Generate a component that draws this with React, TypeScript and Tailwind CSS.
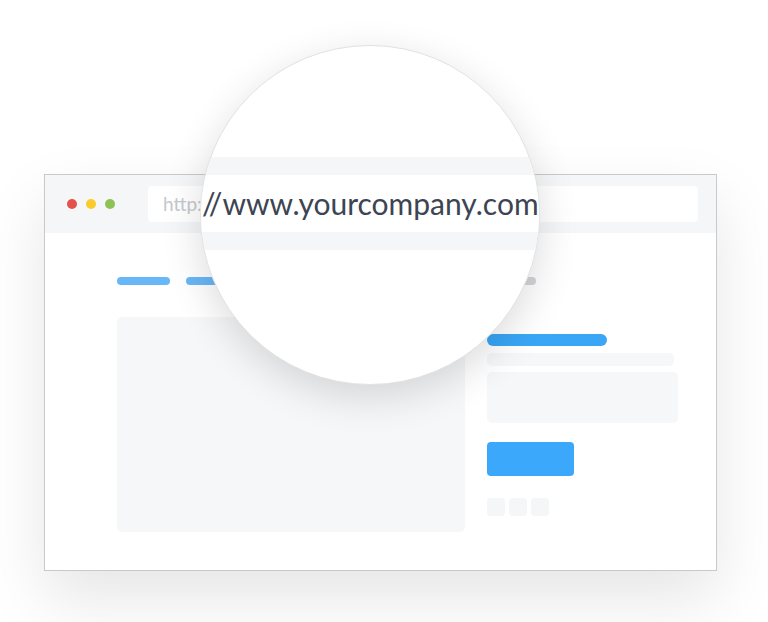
import React from "react";

const Dot = ({ color }: { color: string }) => (
  <span className={`block w-[10px] h-[10px] rounded-full ${color}`} />
);

const Magnifier = () => (
  <div className="absolute left-[200px] top-[45px] w-[340px] h-[340px] rounded-full overflow-hidden bg-white border border-[#e2e2e2] shadow-[0_12px_40px_rgba(0,0,0,0.14)]">
    <div className="pt-[111px]">
      <div className="h-[18px] bg-[#f5f6f8]" />
      <div className="h-[57px] bg-white flex items-center pl-[1px]">
        <span className="text-[30px] text-[#3d4452] whitespace-nowrap font-['Lato',sans-serif]">
          //www.yourcompany.com
        </span>
      </div>
      <div className="h-[18px] bg-[#f5f6f8]" />
    </div>
  </div>
);

const BrowserWindow = () => (
  <div className="w-[673px] h-[397px] border border-[#c9c9c9] bg-white shadow-[0_28px_60px_rgba(0,0,0,0.1)] flex flex-col">
    {/* top bar */}
    <div className="h-[58px] bg-[#f5f6f8] flex items-center pl-[22px]">
      <div className="flex items-center gap-[9px]">
        <Dot color="bg-[#e5514b]" />
        <Dot color="bg-[#fbcb2b]" />
        <Dot color="bg-[#8cc354]" />
      </div>
      <div className="ml-[33px] w-[550px] h-[36px] bg-white rounded-[4px] flex items-center pl-[15px]">
        <span className="text-[19px] text-[#c5c8cd] font-['Lato',sans-serif] whitespace-nowrap">
          http://www.yourcompany.com
        </span>
      </div>
    </div>

    {/* page content */}
    <div className="pt-[44px] pl-[72px]">
      <div className="flex items-center h-[8px]">
        <div className="w-[53px] h-[8px] rounded-full bg-[#68b7f7]" />
        <div className="ml-[16px] w-[54px] h-[8px] rounded-full bg-[#68b7f7]" />
        <div className="ml-[242px] w-[54px] h-[8px] rounded-full bg-[#d4d5d8]" />
      </div>

      <div className="mt-[32px] flex">
        <div className="w-[348px] h-[215px] rounded-[5px] bg-[#f6f7f9]" />
        <div className="ml-[22px] pt-[17px] flex flex-col">
          <div className="w-[120px] h-[12px] rounded-full bg-[#3aa6f6]" />
          <div className="mt-[7px] w-[187px] h-[13px] rounded-[5px] bg-[#f6f7f9]" />
          <div className="mt-[6px] w-[191px] h-[51px] rounded-[5px] bg-[#f6f7f9]" />
          <div className="mt-[19px] w-[87px] h-[34px] rounded-[4px] bg-[#3ba8fb]" />
          <div className="mt-[22px] flex gap-[4px]">
            <div className="w-[18px] h-[18px] rounded-[4px] bg-[#f5f6f8]" />
            <div className="w-[18px] h-[18px] rounded-[4px] bg-[#f5f6f8]" />
            <div className="w-[18px] h-[18px] rounded-[4px] bg-[#f5f6f8]" />
          </div>
        </div>
      </div>
    </div>
  </div>
);

export default function App() {
  return (
    <div className="relative w-[768px] h-[622px] bg-white overflow-hidden font-['Lato',sans-serif]">
      <div className="pt-[174px] pl-[44px]">
        <BrowserWindow />
      </div>
      <Magnifier />
    </div>
  );
}
